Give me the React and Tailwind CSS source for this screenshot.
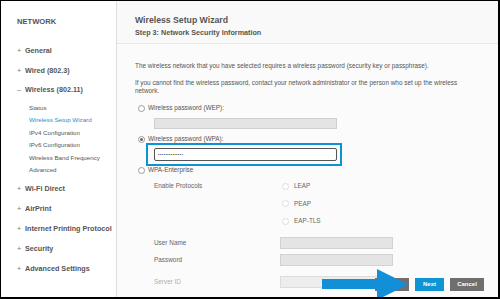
import React from "react";

function Radio({ checked = false, disabled = false }) {
  return (
    <span
      className={
        "inline-flex items-center justify-center w-[7px] h-[7px] rounded-full border shrink-0 bg-white " +
        (disabled ? "border-[#dddddd]" : "border-[#9a9a9a]")
      }
    >
      {checked ? <span className="w-[3px] h-[3px] rounded-full bg-[#666]" /> : null}
    </span>
  );
}

function NavItem({ sign = "+", label, h = "h-5" }) {
  return (
    <div className={"flex items-center text-[7.2px] font-bold text-[#555] " + h}>
      <span className="w-2 font-normal text-[#777]">{sign}</span>
      <span>{label}</span>
    </div>
  );
}

function SubItem({ label, active = false }) {
  return (
    <div
      className={
        "h-[12.5px] leading-[12.5px] text-[6.2px] " + (active ? "text-[#1a8fd1]" : "text-[#555]")
      }
    >
      {label}
    </div>
  );
}

export default function App() {
  return (
    <div className="w-[500px] h-[299px] flex border-t border-l border-r-2 border-b-2 border-black bg-white overflow-hidden font-['Liberation_Sans',Arial,sans-serif]">
      {/* Sidebar */}
      <div className="w-[116px] shrink-0 border-r border-[#dedede] bg-white pl-4">
        <div className="mt-[11px] h-5 leading-5 text-[7.6px] font-bold text-[#555]">NETWORK</div>
        <div className="mt-[9px]">
          <NavItem label="General" />
          <NavItem label="Wired (802.3)" />
          <NavItem sign="–" label="Wireless (802.11)" h="h-[19px]" />
        </div>
        <div className="mt-[1.5px] pl-3">
          <SubItem label="Status" />
          <SubItem label="Wireless Setup Wizard" active />
          <SubItem label="IPv4 Configuration" />
          <SubItem label="IPv6 Configuration" />
          <SubItem label="Wireless Band Frequency" />
          <SubItem label="Advanced" />
        </div>
        <div className="mt-[2.5px]">
          <NavItem label="Wi-Fi Direct" />
          <NavItem label="AirPrint" />
          <NavItem label="Internet Printing Protocol" />
          <NavItem label="Security" />
          <NavItem label="Advanced Settings" />
        </div>
      </div>

      {/* Main */}
      <div className="flex-1 flex flex-col bg-[#fbfbfb] relative overflow-hidden">
        <div className="h-[43px] shrink-0 border-b border-[#e8e8e8] bg-[#f9f9f9] pl-[18px] pt-[13px]">
          <div className="h-3 leading-3 text-[8.7px] font-bold text-[#555]">Wireless Setup Wizard</div>
          <div className="mt-[2px] h-[10px] leading-[10px] text-[7.2px] font-bold text-[#555]">
            Step 3: Network Security Information
          </div>
        </div>

        <div className="pl-[18px] pt-[18px] text-[6.4px] text-[#555]">
          <p className="leading-[8px]">
            The wireless network that you have selected requires a wireless password (security key or passphrase).
          </p>
          <p className="mt-[9px] leading-[8px] w-[335px]">
            If you cannot find the wireless password, contact your network administrator or the person who set up the
            wireless network.
          </p>

          <div className="mt-[8px] h-[10px] flex items-center gap-[3px] pl-[3px]">
            <Radio />
            <span>Wireless password (WEP):</span>
          </div>
          <div className="mt-[5px] ml-[19px] w-[183px] h-[11px] bg-[#e4e4e4] border border-[#cfcfcf]" />

          <div className="mt-[5px] h-[10px] flex items-center gap-[3px] pl-[3px]">
            <Radio checked />
            <span>Wireless password (WPA):</span>
          </div>
          <div className="relative mt-[4px] ml-[19px] w-[183px] h-[13px] bg-white border border-[#555] rounded-[2px] flex items-center pl-[3px]">
            <span className="text-[4px] leading-[4px] text-[#333] tracking-[0.4px]">••••••••••••••</span>
            <div className="absolute -left-[9px] -top-[6px] w-[196px] h-[23px] border-2 border-[#0b93d5]" />
          </div>

          <div className="mt-[4px] h-[10px] flex items-center gap-[3px] pl-[3px]">
            <Radio />
            <span>WPA-Enterprise</span>
          </div>

          <div className="mt-[6px] ml-[19px] grid grid-cols-[126px_113px]">
            <div className="h-[10px] leading-[10px] text-[#666]">Enable Protocols</div>
            <div className="flex flex-col gap-[7.5px] pl-[2px] text-[#666]">
              <div className="h-[10px] flex items-center gap-[5px]">
                <Radio disabled />
                <span>LEAP</span>
              </div>
              <div className="h-[10px] flex items-center gap-[5px]">
                <Radio disabled />
                <span>PEAP</span>
              </div>
              <div className="h-[10px] flex items-center gap-[5px]">
                <Radio disabled />
                <span>EAP-TLS</span>
              </div>
            </div>

            <div className="mt-[11px] h-[12px] leading-[12px] text-[#666]">User Name</div>
            <div className="mt-[11px] h-[12px] bg-[#e4e4e4] border border-[#d2d2d2]" />
            <div className="mt-[5px] h-[12px] leading-[12px] text-[#666]">Password</div>
            <div className="mt-[5px] h-[12px] bg-[#e4e4e4] border border-[#d2d2d2]" />
            <div className="mt-[10px] h-[12px] leading-[12px] text-[#b0b0b0]">Server ID</div>
            <div className="mt-[10px] h-[12px] bg-[#ededed] border border-[#dddddd]" />
          </div>
        </div>

        {/* Footer buttons */}
        <div className="absolute right-[14px] bottom-[6px] flex gap-[6px]">
          <div className="w-[34px] h-[13px] bg-[#6f6f6f] text-white text-[6px] font-bold flex items-center justify-center">
            Back
          </div>
          <div className="w-[29px] h-[13px] bg-[#0f94d4] text-white text-[6px] font-bold flex items-center justify-center">
            Next
          </div>
          <div className="w-[34px] h-[13px] bg-[#6f6f6f] text-white text-[6px] font-bold flex items-center justify-center">
            Cancel
          </div>
        </div>

        {/* Annotation arrow */}
        <svg className="absolute left-[205px] top-[267px]" width="88" height="32" viewBox="0 0 88 32">
          <rect x="0" y="11" width="58" height="10" fill="#1190d8" />
          <polygon points="55,1 86,16.5 55,32" fill="#1190d8" />
        </svg>
      </div>
    </div>
  );
}
